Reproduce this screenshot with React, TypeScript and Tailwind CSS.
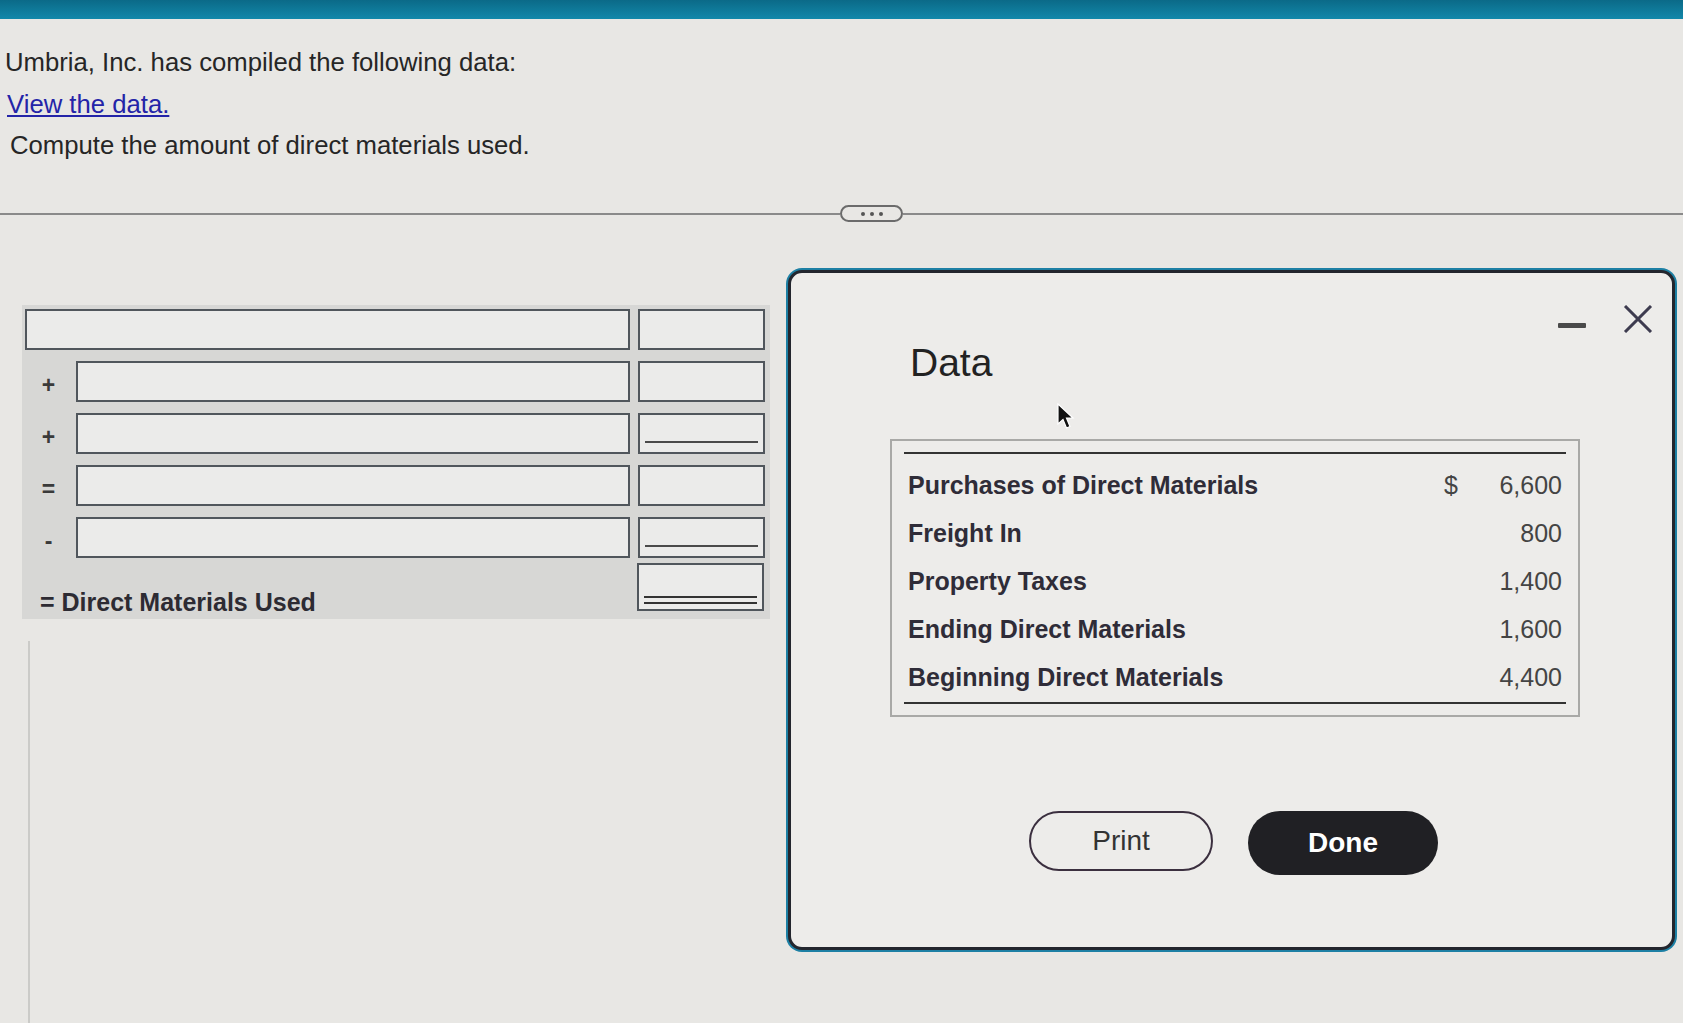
import React from "react"

type Rule = "none" | "single" | "double"

const formRows: { sign: string; rule: Rule }[] = [
  { sign: "+", rule: "none" },
  { sign: "+", rule: "single" },
  { sign: "=", rule: "none" },
  { sign: "-", rule: "single" },
]

const dataRows = [
  { label: "Purchases of Direct Materials", value: "6,600", dollar: true },
  { label: "Freight In", value: "800", dollar: false },
  { label: "Property Taxes", value: "1,400", dollar: false },
  { label: "Ending Direct Materials", value: "1,600", dollar: false },
  { label: "Beginning Direct Materials", value: "4,400", dollar: false },
]

function AmountBox({ rule, tall }: { rule: Rule; tall?: boolean }) {
  return (
    <div
      className={`relative w-[127px] shrink-0 border-2 border-[#50565c] bg-[#ebebea] ${
        tall ? "h-[48px]" : "h-[41px]"
      }`}
    >
      {rule === "single" && (
        <div className="absolute left-[5px] right-[5px] bottom-[9px] h-[2px] bg-[#4a4a4a]" />
      )}
      {rule === "double" && (
        <div className="absolute left-[5px] right-[5px] bottom-[5px] flex flex-col gap-[4px]">
          <div className="h-[2px] bg-[#333]" />
          <div className="h-[2px] bg-[#333]" />
        </div>
      )}
    </div>
  )
}

function LabelBox({ width }: { width: string }) {
  return <div className={`h-[41px] shrink-0 border-2 border-[#50565c] bg-[#ebebea] ${width}`} />
}

export default function App() {
  return (
    <div className="min-h-[1023px] w-full overflow-hidden bg-[#e8e7e4] font-['Liberation_Sans',Arial,sans-serif] text-[#262626]">
      <div className="h-[19px] w-full bg-linear-to-b from-[#0b6a88] to-[#1288aa]" />

      {/* question text */}
      <div className="pt-[28px] pl-[5px] text-[25.7px] leading-[30px]">
        <p>Umbria, Inc. has compiled the following data:</p>
        <p className="mt-[12px] pl-[2px]">
          <a href="#" className="text-[#2424a8] underline underline-offset-2">
            View the data.
          </a>
        </p>
        <p className="mt-[11px] pl-[5px]">Compute the amount of direct materials used.</p>
      </div>

      {/* divider */}
      <div className="mt-[45px] flex items-center">
        <div className="h-[2px] w-[840px] bg-[#8a8a8a]" />
        <div className="flex h-[17px] w-[63px] items-center justify-center gap-[5px] rounded-full border-2 border-[#6b6b6b]">
          <span className="h-[4px] w-[4px] rounded-full bg-[#555]" />
          <span className="h-[4px] w-[4px] rounded-full bg-[#555]" />
          <span className="h-[4px] w-[4px] rounded-full bg-[#555]" />
        </div>
        <div className="h-[2px] flex-1 bg-[#8a8a8a]" />
      </div>

      <div className="mt-[48px] flex items-start">
        {/* worksheet */}
        <div className="w-[788px] shrink-0 pt-[35px] pl-[22px]">
          <div className="flex w-[748px] flex-col gap-[11px] bg-[#d7d7d5] pt-[4px] pr-[6px] pb-[8px] pl-[3px]">
            <div className="flex gap-[8px]">
              <LabelBox width="w-[605px]" />
              <AmountBox rule="none" />
            </div>
            {formRows.map((row, i) => (
              <div key={i} className="flex items-center gap-[8px]">
                <div className="flex w-[43px] shrink-0 justify-center pt-[8px] pl-[4px] text-[23px] font-bold leading-none text-[#3a3a3a]">
                  {row.sign}
                </div>
                <LabelBox width="w-[554px]" />
                <AmountBox rule={row.rule} />
              </div>
            ))}
            <div className="-mt-[6px] flex items-end gap-[8px]">
              <div className="-mb-[6px] flex-1 pl-[15px] text-[25px] font-bold leading-[30px] text-[#2d2b33]">
                = Direct Materials Used
              </div>
              <AmountBox rule="double" tall />
            </div>
          </div>
          <div className="mt-[22px] ml-[6px] h-[400px] border-l-2 border-[#cbcbc8]" />
        </div>

        {/* data dialog */}
        <div className="relative flex h-[680px] w-[887px] shrink-0 flex-col rounded-[14px] border-[3px] border-[#23262e] bg-[#edecea] shadow-[0_0_0_2px_#1d80a4]">
          <div className="flex items-center justify-end gap-[37px] pt-[32px] pr-[19px]">
            <div className="mt-[12px] h-[5px] w-[28px] rounded-[1px] bg-[#4a4a4a]" />
            <svg width="30" height="28" viewBox="0 0 30 28" fill="none">
              <path d="M2 1 L28 27 M28 1 L2 27" stroke="#3d3b4f" strokeWidth="3" />
            </svg>
          </div>

          <h2 className="mt-[8px] pl-[119px] text-[39px] leading-[44px] font-normal text-[#222]">Data</h2>

          <svg className="absolute left-[266px] top-[130px]" width="18" height="28" viewBox="0 0 18 28">
            <path
              d="M1 1 L1 21 L6 16.5 L9.5 25 L13 23.5 L9.5 15 L16 15 Z"
              fill="#111"
              stroke="#fff"
              strokeWidth="1.2"
            />
          </svg>

          <div className="mt-[54px] ml-[99px] h-[278px] w-[690px] border-2 border-[#a9a9a7] px-[12px] pt-[11px]">
            <div className="h-[2px] bg-[#333]" />
            <div className="mt-[8px] border-b-2 border-[#333]">
              {dataRows.map((row) => (
                <div key={row.label} className="flex h-[48px] items-center justify-between pl-[4px] pr-[4px]">
                  <span className="text-[25px] font-bold text-[#2f2c38]">{row.label}</span>
                  <span className="flex w-[118px] items-center text-[25px] text-[#444]">
                    {row.dollar && <span>$</span>}
                    <span className="ml-auto">{row.value}</span>
                  </span>
                </div>
              ))}
            </div>
          </div>

          <div className="mt-[94px] flex justify-center gap-[35px] pl-[4px]">
            <button className="h-[60px] w-[184px] rounded-full border-2 border-[#3b2f3f] text-[28px] text-[#333]">
              Print
            </button>
            <button className="h-[64px] w-[190px] rounded-full bg-[#202024] text-[28px] font-bold text-white">
              Done
            </button>
          </div>
        </div>
      </div>
    </div>
  )
}
